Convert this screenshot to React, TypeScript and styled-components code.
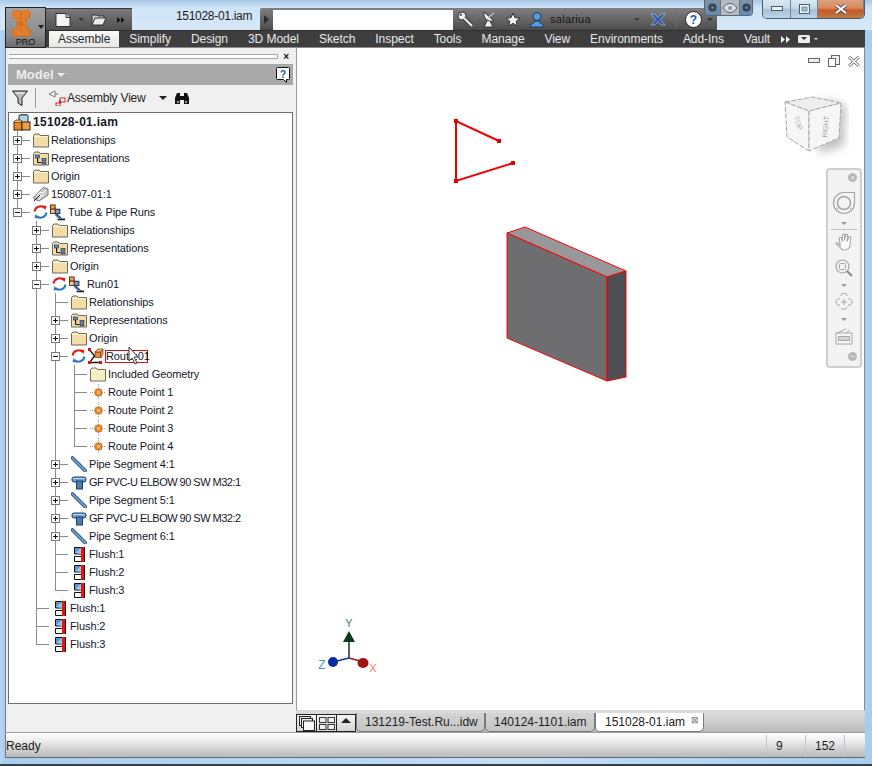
import React from "react";
import styled, { createGlobalStyle } from "styled-components";

const Global = createGlobalStyle`
  html, body { margin: 0; padding: 0; background: #fff; }
  body { width: 872px; height: 766px; overflow: hidden; font-family: "Liberation Sans", Arial, sans-serif; }
  #root { width: 872px; height: 766px; }
  * { box-sizing: border-box; }
`;

const Window = styled.div`
  position: relative;
  width: 872px;
  height: 766px;
  display: flex;
  flex-direction: column;
  overflow: hidden;
  background: linear-gradient(90deg, #b6d5f0 0, #a9cdec 5px, #c4def5 60%, #a8cdee 100%);
  border-bottom: 2px solid #3a3f44;
`;
const TitleArea = styled.div`
  height: 30px;
  flex: none;
  display: flex;
  padding-left: 45px;
  background: linear-gradient(180deg, #a9c9e8 0, #cfe4f7 8px, #d6e8f8 100%);
`;
const QuickBar = styled.div`
  width: 87px;
  height: 22px;
  margin-top: 8px;
  display: flex;
  align-items: center;
  gap: 7px;
  padding-left: 10px;
  background: linear-gradient(180deg, #7a7a7a, #505050);
  border-top: 1px solid #3c3c3c;
`;
const DocTitle = styled.div`
  width: 128px;
  padding: 9px 0 0 44px;
  font-size: 12px;
  letter-spacing: -0.3px;
  color: #1c1c1c;
  white-space: nowrap;
`;
const InfoBar = styled.div`
  width: 457px;
  height: 22px;
  margin-top: 8px;
  display: flex;
  align-items: center;
  background: linear-gradient(180deg, #808080, #4c4c4c);
  border-top-left-radius: 2px;
`;
const SearchArrow = styled.div`
  width: 13px;
  display: flex;
  justify-content: center;
`;
const SearchInput = styled.div`
  width: 180px;
  height: 20px;
  margin-top: 2px;
  background: #fff;
`;
const InfoIcons = styled.div`
  display: flex;
  align-items: center;
  height: 100%;
  padding-left: 4px;
`;
const InfoSep = styled.span`
  width: 1px;
  height: 18px;
  margin: 0 8px 0 10px;
  background: #707070;
`;
const UserName = styled.span`
  font-size: 11px;
  letter-spacing: 0.3px;
  color: #1a1212;
  width: 84px;
`;
const AppButton = styled.div`
  position: absolute;
  left: 5px;
  top: 7px;
  width: 41px;
  height: 41px;
  border: 1px solid #222;
  background: linear-gradient(180deg, #a3a3a3, #8a8a8a 70%, #6e6e6e);
  z-index: 3;
`;
const AppGlyph = styled.svg`
  display: block;
`;
const ProLabel = styled.span`
  position: absolute;
  left: 0;
  right: 0;
  bottom: 0;
  text-align: center;
  font-size: 9px;
  color: #111;
`;
const NvidiaCluster = styled.div`
  position: absolute;
  top: 0;
  left: 704px;
  width: 49px;
  height: 16px;
  display: flex;
  border: 1px solid #5c6670;
  border-top: none;
  border-radius: 0 0 4px 4px;
  overflow: hidden;
  z-index: 2;
`;
const NvidiaCell = styled.div<{ $w: number; $light?: boolean }>`
  width: ${(p) => p.$w}px;
  display: flex;
  align-items: center;
  justify-content: center;
  background: ${(p) => (p.$light ? "#b4babf" : "linear-gradient(180deg,#7f93a6,#5f8ab4)")};
  border-right: 1px solid #6c7680;
  &:last-child { border-right: none; }
`;
const WindowControls = styled.div`
  position: absolute;
  top: 0;
  left: 762px;
  width: 103px;
  height: 19px;
  display: flex;
  border: 1px solid #4c5c6c;
  border-top: none;
  border-radius: 0 0 5px 5px;
  overflow: hidden;
  z-index: 2;
`;
const WinBtn = styled.div<{ $w: number; $close?: boolean }>`
  width: ${(p) => p.$w}px;
  display: flex;
  align-items: center;
  justify-content: center;
  border-right: 1px solid #6f8295;
  background: ${(p) =>
    p.$close
      ? "linear-gradient(180deg, #d9a27e 0, #d98a5c 45%, #d8532a 55%, #b9692f 75%, #c07a4a 100%)"
      : "linear-gradient(180deg, #dbe8f3 0, #c5d9ea 45%, #a7c0d6 55%, #bcd4e8 100%)"};
`;
const Ribbon = styled.div`
  height: 18px;
  flex: none;
  margin: 0 7px 0 45px;
  padding-left: 4px;
  display: flex;
  align-items: stretch;
  background: #3e3e3e;
  border-bottom: 1px solid #8c8c8c;
  border-top: 1px solid #2e2e2e;
`;
const RibbonTab = styled.div<{ $active?: boolean }>`
  padding: 0 ${(p) => (p.$active ? "9px" : "10px")};
  font-size: 12px;
  letter-spacing: -0.05px;
  line-height: 17px;
  white-space: nowrap;
  color: ${(p) => (p.$active ? "#2a2a2a" : "#e8e8e8")};
  background: ${(p) => (p.$active ? "linear-gradient(180deg,#fafafa,#e6e6e6)" : "transparent")};
`;
const RibbonExtra = styled.div`
  display: flex;
  align-items: center;
  gap: 7px;
  margin-left: 1px;
`;
const RibbonMenuCaret = styled.span`
  display: flex;
  margin-left: -3px;
`;
const Body = styled.div`
  flex: 1;
  min-height: 0;
  display: flex;
  margin: 0 7px 0 5px;
`;
const SidePanel = styled.div`
  width: 291px;
  flex: none;
  display: flex;
  flex-direction: column;
  padding: 1px 3px 28px 2px;
  background: #f0f0f0;
  border-left: 1px solid #6d7d8c;
`;
const PanelGrip = styled.div`
  height: 15px;
  flex: none;
  display: flex;
  align-items: center;
  gap: 5px;
  padding: 0 4px 0 1px;
`;
const GripLines = styled.div`
  flex: 1;
  height: 5px;
  border: 1px solid #a8a8a8;
  border-left: none;
  background: #fff;
`;
const GripClose = styled.span`
  font-size: 10px;
  font-weight: bold;
  color: #111;
  line-height: 10px;
`;
const ModelBar = styled.div`
  height: 21px;
  flex: none;
  display: flex;
  align-items: center;
  justify-content: space-between;
  padding: 0 3px 0 8px;
  background: #a9a9a9;
`;
const ModelTitle = styled.span`
  font-size: 13px;
  font-weight: bold;
  color: #ececec;
  display: flex;
  align-items: center;
  gap: 3px;
`;
const Caret = styled.i<{ $c?: string; $s?: number }>`
  display: inline-block;
  width: 0;
  height: 0;
  border-left: ${(p) => p.$s ?? 4}px solid transparent;
  border-right: ${(p) => p.$s ?? 4}px solid transparent;
  border-top: ${(p) => p.$s ?? 4}px solid ${(p) => p.$c ?? "#333"};
`;
const PanelTools = styled.div`
  height: 27px;
  flex: none;
  display: flex;
  align-items: center;
  padding: 0 0 2px 4px;
`;
const ToolSep = styled.div`
  width: 1px;
  height: 20px;
  margin: 0 12px 0 7px;
  background: #9a9a9a;
`;
const ViewName = styled.span`
  font-size: 12px;
  letter-spacing: -0.2px;
  color: #1f1f1f;
  margin: 0 13px 0 1px;
  white-space: nowrap;
`;
const TreeBox = styled.div`
  flex: 1;
  min-height: 0;
  background: #fff;
  border: 1px solid #6e6e6e;
`;
const TreeRow = styled.div`
  position: relative;
  height: 18px;
  display: flex;
  align-items: center;
  white-space: nowrap;
`;
const RootRow = styled(TreeRow)`
  padding-left: 4px;
  gap: 2px;
`;
const Guide = styled.div<{ $kind: GuideKind }>`
  position: relative;
  width: 19px;
  height: 18px;
  flex: none;
  &::before {
    content: "";
    display: ${(p) => (p.$kind === "none" ? "none" : "block")};
    position: absolute;
    left: 8px;
    top: 0;
    width: 1px;
    height: ${(p) => (p.$kind === "end" || p.$kind === "minusEnd" ? "10px" : "18px")};
    background: #8a8a8a;
  }
  &::after {
    content: "";
    display: ${(p) => (p.$kind === "none" || p.$kind === "line" ? "none" : "block")};
    position: absolute;
    left: 9px;
    top: 9px;
    width: 12px;
    height: 1px;
    background: #8a8a8a;
  }
`;
const Expander = styled.span`
  position: absolute;
  left: 4px;
  top: 5px;
  width: 9px;
  height: 9px;
  border: 1px solid #7a7a7a;
  background: #fff;
  z-index: 1;
  &::before {
    content: "";
    position: absolute;
    left: 1px;
    top: 3px;
    width: 5px;
    height: 1px;
    background: #111;
  }
`;
const ExpanderPlus = styled(Expander)`
  &::after {
    content: "";
    position: absolute;
    left: 3px;
    top: 1px;
    width: 1px;
    height: 5px;
    background: #111;
  }
`;
const Icons = styled.div`
  display: flex;
  align-items: center;
  gap: 2px;
  margin-left: 5px;
  flex: none;
`;
const Label = styled.span<{ $tight?: boolean; $edit?: boolean }>`
  font-size: 11px;
  letter-spacing: ${(p) => (p.$tight ? "-0.52px" : "-0.1px")};
  margin-left: ${(p) => (p.$edit ? "1px" : "2px")};
  color: #14182a;
  ${(p) => (p.$edit ? "border: 1px solid #e01010; line-height: 11px; width: 43px; height: 13px;" : "")}
`;
const RootLabel = styled.span`
  font-size: 12px;
  letter-spacing: 0.3px;
  font-weight: bold;
  color: #14182a;
`;
const FlushSlot = styled.span`
  width: 16px;
  display: flex;
  justify-content: flex-end;
  padding-right: 2px;
`;
const Cursor = styled.svg`
  position: absolute;
  left: 119px;
  top: 0px;
  z-index: 2;
`;
const Main = styled.div`
  flex: 1;
  min-width: 0;
  display: flex;
  flex-direction: column;
  background: #f0f0f0;
`;
const Viewport = styled.div`
  position: relative;
  flex: 1;
  min-height: 0;
  background: #fff;
  border-left: 1px solid #9a9a9a;
  border-right: 1px solid #8a8a8a;
  border-bottom: 1px solid #d8d8d8;
`;
const Scene = styled.svg`
  position: absolute;
  inset: 0;
`;
const ViewControls = styled.div`
  position: absolute;
  top: 7px;
  right: 4px;
  display: flex;
  gap: 8px;
  align-items: center;
`;
const NavBar = styled.div`
  position: absolute;
  top: 120px;
  left: 529px;
  width: 36px;
  height: 200px;
  display: flex;
  flex-direction: column;
  align-items: center;
  background: #f3f3f3;
  border: 2px solid #cfcfcf;
  border-radius: 4px;
  padding-top: 3px;
`;
const NavDot = styled.div`
  align-self: flex-end;
  margin-right: 3px;
  width: 9px;
  height: 9px;
  border-radius: 50%;
  background: #b8b8b8;
  display: flex;
  align-items: center;
  justify-content: center;
  font-size: 8px;
  line-height: 8px;
  color: #f4f4f4;
`;
const NavRule = styled.div`
  width: 26px;
  height: 1px;
  margin: 1px 0 2px;
  background: #c4c4c4;
`;
const NavCaret = styled.div`
  height: 10px;
  display: flex;
  align-items: center;
  margin-top: 3px;
`;
const NavGap = styled.div<{ $h: number }>`
  height: ${(p) => p.$h}px;
  flex: none;
`;
const DocTabs = styled.div`
  height: 21px;
  flex: none;
  display: flex;
  align-items: flex-start;
  background: linear-gradient(180deg, #dedede, #bbbbbb);
`;
const TabIcons = styled.div`
  display: flex;
  flex: none;
  height: 18px;
  margin-top: 3px;
`;
const TabIcon = styled.div<{ $w: number }>`
  width: ${(p) => p.$w}px;
  display: flex;
  align-items: center;
  justify-content: center;
  border: 1px solid #222;
  border-right-width: 0;
  background: linear-gradient(180deg, #f5f5f5, #d4d4d4);
  &:last-child { border-right-width: 1px; }
`;
const DocTab = styled.div<{ $w: number; $active?: boolean }>`
  width: ${(p) => p.$w}px;
  height: 19px;
  margin-top: 2px;
  display: flex;
  align-items: center;
  gap: 6px;
  padding-left: ${(p) => (p.$active ? "9px" : "8px")};
  font-size: 12px;
  white-space: nowrap;
  color: #222;
  border: 1px solid #7a7a7a;
  border-top: none;
  border-radius: 0 0 5px 5px;
  background: ${(p) => (p.$active ? "#fff" : "linear-gradient(180deg,#d4d4d4,#c4c4c4)")};
`;
const TabClose = styled.span`
  font-size: 9px;
  color: #777;
  margin-top: -5px;
`;
const StatusBar = styled.div`
  height: 26px;
  flex: none;
  margin: 0 7px 6px 5px;
  padding-top: 1px;
  display: flex;
  align-items: center;
  font-size: 12px;
  color: #1c1c1c;
  background: linear-gradient(180deg, #fdfdfd 0, #f2f2f2 25%, #b9b9b9 100%);
  border-top: 1px solid #9c9c9c;
  border-bottom: 1px solid #5f6b76;
  border-left: 1px solid #6d7d8c;
`;
const StatusText = styled.span`
  flex: 1;
`;
const StatusCell = styled.div<{ $w: number }>`
  width: ${(p) => p.$w}px;
  height: 22px;
  display: flex;
  align-items: center;
  padding-left: 9px;
  border-left: 1px solid #c6c6c6;
`;

/* ---------- icons ---------- */
const Folder = ({ tint = "#f4dca8" }: { tint?: string }) => (
  <svg width="16" height="15" viewBox="0 0 16 15">
    <path d="M.5 14V2.500l1.500-1.500h4l1.500 1.500H15.500V14z" fill={tint} stroke="#6e6a58" />
    <path d="M1 3.500h14" stroke="#fff6dc" />
  </svg>
);
const RepFolder = () => (
  <svg width="16" height="15" viewBox="0 0 16 15">
    <path d="M.5 14V2.500l1.500-1.500h4l1.500 1.500H15.500V14z" fill="#f4dca8" stroke="#6e6a58" />
    <rect x="2.500" y="4" width="4" height="3" fill="#5d8fc4" stroke="#223" strokeWidth=".6" />
    <path d="M4.500 7v4.500h4M4.500 9h1" stroke="#111" fill="none" />
    <rect x="9" y="7.500" width="4" height="2.500" fill="#5d8fc4" stroke="#223" strokeWidth=".6" />
    <rect x="9" y="11" width="4" height="2" fill="#5d8fc4" stroke="#223" strokeWidth=".6" />
  </svg>
);
const Assembly = () => (
  <svg width="18" height="17" viewBox="0 0 18 17">
    <path d="M6 1.500h9v7H6z" fill="#b7d3ea" stroke="#1f2a36" />
    <path d="M6 1.500l2-1h6l1 1" fill="#dbe8f3" stroke="#1f2a36" strokeWidth=".8" />
    <rect x="1" y="8" width="8" height="8" fill="#e8882c" stroke="#332010" />
    <rect x="9" y="8" width="8" height="8" fill="#efa04a" stroke="#332010" />
    <path d="M1 8l2-2h5l1 2" fill="#f2bb78" stroke="#332010" strokeWidth=".7" />
  </svg>
);
const PartIcon = () => (
  <svg width="16" height="16" viewBox="0 0 16 16">
    <path d="M1 11l9-9.500 5 1.500v6l-9 6-5-2z" fill="#c9c9c9" stroke="#777" />
    <path d="M4 10l3-4 3 1 3-3M6 14l2-5 3 1" stroke="#fff" fill="none" />
    <path d="M1 15l6-6" stroke="#222" />
  </svg>
);
const Update = () => (
  <svg width="15" height="14" viewBox="0 0 15 14">
    <path d="M1.500 6.500a6 6 0 0 1 10-3.500" fill="none" stroke="#e01c14" strokeWidth="2" />
    <path d="M9 .5l4.500.5-1 4z" fill="#e01c14" />
    <path d="M13.500 7.500a6 6 0 0 1-10 3.500" fill="none" stroke="#2f78c0" strokeWidth="2" />
    <path d="M6 13.500l-4.500-.5 1-4z" fill="#2f78c0" />
  </svg>
);
const RunIcon = () => (
  <svg width="16" height="17" viewBox="0 0 17 17">
    <rect x=".5" y=".5" width="5" height="4.500" fill="#e9a24f" stroke="#5a2a10" />
    <rect x="5.500" y="5" width="5" height="4.500" fill="#6d9dd0" stroke="#14233a" />
    <rect x=".5" y="5" width="5" height="4.500" fill="#f3c88f" stroke="#5a2a10" />
    <path d="M6 10l5 5" stroke="#5a86b5" strokeWidth="3" />
    <path d="M5 9l8 6.500h3" stroke="#16243c" fill="none" />
    <path d="M8 16h8" stroke="#16243c" strokeWidth="1.500" />
  </svg>
);
const RouteIcon = () => (
  <svg width="16" height="16" viewBox="0 0 16 16">
    <path d="M1.500 1.500l5 6.500-5 6.500H13" fill="none" stroke="#111" strokeWidth="1.300" />
    <rect x="7" y="4" width="6" height="5.500" fill="#e98d2f" stroke="#6a3410" strokeWidth=".7" />
    <path d="M7 4l3-3h5v5l-2 3.500V4zM13 4l2-3" fill="#f3b877" stroke="#6a3410" strokeWidth=".7" />
    <rect x="0" y="0" width="3" height="3" fill="#e01010" />
    <rect x="0" y="13" width="3" height="3" fill="#e01010" />
    <rect x="11" y="13" width="3" height="3" fill="#e01010" />
  </svg>
);
const RoutePoint = () => (
  <svg width="16" height="16" viewBox="0 0 16 16">
    <path d="M8.500 0v16M0 8.500h16" stroke="#9a9a9a" strokeDasharray="1 1" />
    <rect x="5" y="5" width="7" height="7" rx="2.500" fill="#e5862a" stroke="#c97a28" />
    <rect x="7" y="7" width="3" height="3" fill="#f2b36e" />
  </svg>
);
const PipeIcon = () => (
  <svg width="16" height="16" viewBox="0 0 16 16">
    <path d="M1.500 2L14.500 15" stroke="#254a78" strokeWidth="3.600" strokeLinecap="round" />
    <path d="M1.500 2L14.500 15" stroke="#6ea0d4" strokeWidth="1.800" strokeLinecap="round" />
  </svg>
);
const ElbowIcon = () => (
  <svg width="16" height="15" viewBox="0 0 16 15">
    <rect x="1" y="2" width="14" height="5" rx="2" fill="#6ea0d4" stroke="#1e3d63" />
    <rect x="5.500" y="6" width="6" height="8" fill="#4b7cb0" stroke="#1e3d63" />
    <path d="M2 3.500h12" stroke="#bcd6ef" />
  </svg>
);
const FlushIcon = () => (
  <FlushSlot>
    <svg width="11" height="15" viewBox="0 0 11 15">
      <path d="M.5 9.500h7V14.500H.5z" fill="#fff" stroke="#111" />
      <path d="M.5.5h7V7H.5z" fill="#5d93d3" stroke="#111" />
      <path d="M1 6l6-5v6z" fill="#9fc0e6" />
      <rect x="7" y="0" width="3" height="15" fill="#e81414" />
      <path d="M10.500 0v15" stroke="#111" />
    </svg>
  </FlushSlot>
);

type GuideKind = "none" | "line" | "tee" | "end" | "plus" | "minus" | "minusEnd";
type IconName = "folder" | "geo" | "rep" | "part" | "update-run" | "update-route" | "point" | "pipe" | "elbow" | "flush";
type Row = { depth: GuideKind[]; icon: IconName; text: string; tight?: boolean };

const iconFor = (n: IconName) => {
  switch (n) {
    case "folder": return <Folder />;
    case "geo": return <Folder tint="#f5f0c0" />;
    case "rep": return <RepFolder />;
    case "part": return <PartIcon />;
    case "update-run": return (<><Update /><RunIcon /></>);
    case "update-route": return (<><Update /><RouteIcon /></>);
    case "point": return <RoutePoint />;
    case "pipe": return <PipeIcon />;
    case "elbow": return <ElbowIcon />;
    case "flush": return <FlushIcon />;
  }
};

const rows: Row[] = [
  { depth: ["plus"], icon: "folder", text: "Relationships" },
  { depth: ["plus"], icon: "rep", text: "Representations" },
  { depth: ["plus"], icon: "folder", text: "Origin" },
  { depth: ["plus"], icon: "part", text: "150807-01:1" },
  { depth: ["minusEnd"], icon: "update-run", text: "Tube & Pipe Runs" },
  { depth: ["none", "plus"], icon: "folder", text: "Relationships" },
  { depth: ["none", "plus"], icon: "rep", text: "Representations" },
  { depth: ["none", "plus"], icon: "folder", text: "Origin" },
  { depth: ["none", "minus"], icon: "update-run", text: "Run01" },
  { depth: ["none", "line", "tee"], icon: "folder", text: "Relationships" },
  { depth: ["none", "line", "plus"], icon: "rep", text: "Representations" },
  { depth: ["none", "line", "plus"], icon: "folder", text: "Origin" },
  { depth: ["none", "line", "minus"], icon: "update-route", text: "Route:01" },
  { depth: ["none", "line", "line", "tee"], icon: "geo", text: "Included Geometry" },
  { depth: ["none", "line", "line", "tee"], icon: "point", text: "Route Point 1" },
  { depth: ["none", "line", "line", "tee"], icon: "point", text: "Route Point 2" },
  { depth: ["none", "line", "line", "tee"], icon: "point", text: "Route Point 3" },
  { depth: ["none", "line", "line", "end"], icon: "point", text: "Route Point 4" },
  { depth: ["none", "line", "plus"], icon: "pipe", text: "Pipe Segment 4:1" },
  { depth: ["none", "line", "plus"], icon: "elbow", text: "GF PVC-U ELBOW 90 SW M32:1", tight: true },
  { depth: ["none", "line", "plus"], icon: "pipe", text: "Pipe Segment 5:1" },
  { depth: ["none", "line", "plus"], icon: "elbow", text: "GF PVC-U ELBOW 90 SW M32:2", tight: true },
  { depth: ["none", "line", "plus"], icon: "pipe", text: "Pipe Segment 6:1" },
  { depth: ["none", "line", "tee"], icon: "flush", text: "Flush:1" },
  { depth: ["none", "line", "tee"], icon: "flush", text: "Flush:2" },
  { depth: ["none", "line", "end"], icon: "flush", text: "Flush:3" },
  { depth: ["none", "tee"], icon: "flush", text: "Flush:1" },
  { depth: ["none", "tee"], icon: "flush", text: "Flush:2" },
  { depth: ["none", "end"], icon: "flush", text: "Flush:3" },
];

const ribbonTabs = ["Simplify", "Design", "3D Model", "Sketch", "Inspect", "Tools", "Manage", "View", "Environments", "Add-Ins", "Vault"];

const TreeItem = ({ row }: { row: Row }) => {
  const editing = row.text === "Route:01";
  return (
    <TreeRow>
      {row.depth.map((k, i) => (
        <Guide key={i} $kind={k}>
          {k === "plus" && <ExpanderPlus />}
          {(k === "minus" || k === "minusEnd") && <Expander />}
        </Guide>
      ))}
      <Icons>{iconFor(row.icon)}</Icons>
      <Label $edit={editing} $tight={row.tight}>{row.text}</Label>
      {editing && (
        <Cursor width="11" height="18" viewBox="0 0 11 18">
          <path d="M1 0v14l3-3 3 6 2-1-3-6h4z" fill="#fff" stroke="#333" strokeWidth="1" />
        </Cursor>
      )}
    </TreeRow>
  );
};

const Scene3D = () => (
  <Scene width="567" height="662" viewBox="297 48 567 662">
    <defs>
      <filter id="blur"><feGaussianBlur stdDeviation="4" /></filter>
    </defs>
    <path d="M499 141L456 121V181L513 163" fill="none" stroke="#f00000" strokeWidth="2" />
    {[[456, 121], [499, 141], [456, 181], [513, 163]].map(([x, y]) => (
      <rect key={x + y} x={x - 2} y={y - 2} width="4" height="4" fill="#e00000" />
    ))}
    <path d="M507 233L525 227L626 271L607 277z" fill="#98989b" stroke="#f00" />
    <path d="M507 233L607 277V381L507 338z" fill="#6e6e71" stroke="#f00" />
    <path d="M607 277L626 271V377L607 381z" fill="#4f4f53" stroke="#f00" />
    <path d="M349 658V640" stroke="#0a3a1a" strokeWidth="1.500" />
    <path d="M349 631l6 11h-12z" fill="#0a3a1a" />
    <path d="M349 658l-12 3" stroke="#123c9c" strokeWidth="1.500" />
    <ellipse cx="333" cy="662" rx="5" ry="5" fill="#0c2aa0" />
    <path d="M349 658l11 3" stroke="#a01818" strokeWidth="1.500" />
    <ellipse cx="363" cy="663" rx="5.500" ry="5" fill="#a01412" />
    <text x="349" y="627" textAnchor="middle" fontSize="11" fill="#5e7a66" fontFamily="Liberation Sans">Y</text>
    <text x="322" y="669" textAnchor="middle" fontSize="12" fill="#4d8fd8" fontFamily="Liberation Sans">Z</text>
    <text x="373" y="672" textAnchor="middle" fontSize="11" fill="#f08060" fontFamily="Liberation Sans">X</text>
    <path d="M824 98L846 106L844 146L818 154Z" fill="#c4c4c4" filter="url(#blur)" />
    <g stroke="#a8a8a8" fill="#f6f6f6" strokeDasharray="5 1.500">
      <path d="M785 102L813 97L841 103L809 111z" fill="#eeeeee" />
      <path d="M785 102L809 111V151L787 137z" />
      <path d="M809 111L841 103L839 138L809 151z" />
    </g>
    <text transform="translate(796 124) rotate(70)" textAnchor="middle" fontSize="7" fill="#b0b0b0" fontFamily="Liberation Sans">TOP</text>
    <text transform="translate(828 127) rotate(-85)" textAnchor="middle" fontSize="7" fill="#a0a0a0" fontFamily="Liberation Sans">RIGHT</text>
  </Scene>
);

const NavIcon = ({ kind }: { kind: "wheel" | "hand" | "zoom" | "orbit" | "rewind" }) => {
  const c = "#a6a6a6";
  if (kind === "wheel")
    return (
      <svg width="24" height="24" viewBox="0 0 24 24" fill="none" stroke={c}>
        <path d="M12 1.500H22.500V12a10.500 10.500 0 0 1-21 0A10.500 10.500 0 0 1 12 1.500z" strokeWidth="1.200" />
        <circle cx="12" cy="12" r="6.500" strokeWidth="1.500" />
        <path d="M6 17l-2 2M18 17l2 2" />
      </svg>
    );
  if (kind === "hand")
    return (
      <svg width="19" height="19" viewBox="0 0 18 18" fill="#fafafa" stroke={c}>
        <path d="M2 10l3 3-1-7a1 1 0 0 1 2 0l1 3V3a1 1 0 0 1 2 0v5l1-5a1 1 0 0 1 2 0l-.5 6 1.500-4a1 1 0 0 1 2 .5L14 14c-1 3-6 4-8 2L1 11z" />
      </svg>
    );
  if (kind === "zoom")
    return (
      <svg width="18" height="18" viewBox="0 0 18 18" fill="none" stroke={c}>
        <circle cx="7.500" cy="7.500" r="6.500" strokeWidth="1.200" />
        <rect x="4.500" y="4.500" width="6" height="6" rx="1" />
        <path d="M12 12l5 5" strokeWidth="2.200" stroke="#8c8c8c" />
      </svg>
    );
  if (kind === "orbit")
    return (
      <svg width="18" height="18" viewBox="0 0 18 18" fill="none" stroke={c}>
        <path d="M6 3a3 3 0 0 1 6 0M13 6a3 3 0 0 1 4 3 3 3 0 0 1-4 3M12 14c-1 3-5 3-6 1M5 12a3 3 0 0 1-4-3 3 3 0 0 1 4-3" />
        <path d="M9 6v6M6 9h6" />
      </svg>
    );
  return (
    <svg width="18" height="17" viewBox="0 0 18 17" fill="none" stroke={c}>
      <rect x="1" y="5" width="16" height="11" fill="#f6f6f6" />
      <rect x="3.500" y="8.500" width="11" height="4" fill="#d4d4d4" />
      <path d="M2 5l9-4M11 5l4-3" />
    </svg>
  );
};

const EyeDot = () => (
  <svg width="11" height="11" viewBox="0 0 11 11"><circle cx="5.500" cy="5.500" r="4" fill="#36444f" /><circle cx="5.500" cy="5.500" r="1.500" fill="#6e8092" /></svg>
);

export default function App() {
  return (
    <Window>
      <Global />
      <AppButton>
        <AppGlyph width="39" height="30" viewBox="0 0 39 30">
          <path d="M7 3h17v7h-4v11h4v7H7v-7h4V10H7z" fill="#e57e2a" stroke="#d96f1c" />
          <path d="M15 5v20M12 16h7" stroke="#b04a14" fill="none" strokeDasharray="2 2" />
          <path d="M32 17h6l-3 4z" fill="#222" />
        </AppGlyph>
        <ProLabel>PRO</ProLabel>
      </AppButton>
      <NvidiaCluster>
        <NvidiaCell $w={16}><EyeDot /></NvidiaCell>
        <NvidiaCell $w={19} $light>
          <svg width="16" height="12" viewBox="0 0 16 12"><path d="M1 6c4-6 10-6 14 0-4 6-10 6-14 0z" fill="#d8dfe4" stroke="#5a646c" /><circle cx="8" cy="6" r="2" fill="#8a98a4" /></svg>
        </NvidiaCell>
        <NvidiaCell $w={12}><EyeDot /></NvidiaCell>
      </NvidiaCluster>
      <WindowControls>
        <WinBtn $w={28}>
          <svg width="12" height="6" viewBox="0 0 12 6"><rect x=".5" y=".5" width="11" height="4" fill="#eef4f8" stroke="#4c5c6a" /></svg>
        </WinBtn>
        <WinBtn $w={27}>
          <svg width="11" height="10" viewBox="0 0 11 10"><rect x=".5" y=".5" width="10" height="9" fill="#eef4f8" stroke="#4c5c6a" /><rect x="3" y="3" width="5" height="4" fill="#a9c2d8" stroke="#4c5c6a" strokeWidth=".6" /></svg>
        </WinBtn>
        <WinBtn $w={46} $close>
          <svg width="14" height="10" viewBox="0 0 14 10"><path d="M2 1l10 8M12 1L2 9" stroke="#444" strokeWidth="3.600" /><path d="M2 1l10 8M12 1L2 9" stroke="#fff" strokeWidth="2.200" /></svg>
        </WinBtn>
      </WindowControls>

      <TitleArea>
        <QuickBar>
          <svg width="16" height="14" viewBox="0 0 16 14"><path d="M1 .5h10l4 4v9H1z" fill="#f4f4f4" stroke="#333" /><path d="M11 .5v4h4" fill="#ccc" stroke="#333" /></svg>
          <Caret $c="#3a3a3a" $s={3} />
          <svg width="16" height="13" viewBox="0 0 16 13"><path d="M1 12V2h5l1 1h6v2" fill="#cfcfcf" stroke="#333" /><path d="M1 12l3-7h11l-3 7z" fill="#ececec" stroke="#333" /></svg>
          <svg width="8" height="6" viewBox="0 0 8 6" style={{ marginLeft: 3 }}><path d="M0 0l3.500 3L0 6zM4 0l3.500 3L4 6z" fill="#111" /></svg>
        </QuickBar>
        <DocTitle>151028-01.iam</DocTitle>
        <InfoBar>
          <SearchArrow>
            <svg width="6" height="9" viewBox="0 0 6 9"><path d="M0 0l5 4.500L0 9z" fill="#2c2c2c" /></svg>
          </SearchArrow>
          <SearchInput />
          <InfoIcons>
            <svg width="17" height="17" viewBox="0 0 17 17" style={{ marginRight: 7 }}><circle cx="5" cy="5" r="4" fill="#f0f0f0" stroke="#333" /><path d="M7 7l8 8" stroke="#333" strokeWidth="4" /><path d="M7 7l8 8" stroke="#e8e8e8" strokeWidth="2.400" /><circle cx="3.800" cy="3.800" r="1.200" fill="#555" /></svg>
            <svg width="16" height="17" viewBox="0 0 16 17" style={{ marginRight: 8 }}><path d="M3 1c-1 6 3 10 10 9z" fill="#f2f2f2" stroke="#333" /><path d="M6 10l-3 6h9L9 10" fill="#f2f2f2" stroke="#333" /><path d="M8 6l5-4" stroke="#eee" /></svg>
            <svg width="16" height="15" viewBox="0 0 16 15" style={{ marginRight: 8 }}><path d="M8 1l2 4.700 5 .4-3.800 3.200L12.400 14 8 11.400 3.600 14l1.200-4.700L1 6.100l5-.4z" fill="#f2f2f2" stroke="#2c2c2c" /></svg>
            <svg width="16" height="17" viewBox="0 0 16 17" style={{ marginRight: 5 }}><circle cx="8" cy="5.500" r="4" fill="#5a9ad8" stroke="#173a66" /><path d="M1 16c0-3 4-3 5-6h4c1 3 5 3 5 6z" fill="#5a9ad8" stroke="#173a66" /></svg>
            <UserName>salariua</UserName>
            <Caret $c="#3c3c3c" $s={3} />
            <svg width="16" height="13" viewBox="0 0 16 13" style={{ marginLeft: 10 }}><path d="M1 1h4l3 3.500L11 1h4l-4.500 5.500L15 12h-4L8 8.500 5 12H1l4.500-5.500z" fill="#2e5fa8" stroke="#cfe0f2" strokeWidth=".5" /></svg>
            <InfoSep />
            <svg width="17" height="17" viewBox="0 0 17 17"><circle cx="8.500" cy="8.500" r="8" fill="#fff" stroke="#222" /><text x="8.500" y="13" textAnchor="middle" fontSize="12" fontWeight="bold" fill="#1d56b0" fontFamily="Liberation Sans">?</text></svg>
            <span style={{ marginLeft: 5, display: "flex" }}><Caret $c="#333" $s={3} /></span>
          </InfoIcons>
        </InfoBar>
      </TitleArea>

      <Ribbon>
        <RibbonTab $active>Assemble</RibbonTab>
        {ribbonTabs.map((t) => (
          <RibbonTab key={t}>{t}</RibbonTab>
        ))}
        <RibbonExtra>
          <svg width="10" height="7" viewBox="0 0 10 7"><path d="M0 0l4 3.500L0 7zM5 0l4 3.500L5 7z" fill="#f0f0f0" /></svg>
          <svg width="12" height="8" viewBox="0 0 12 8"><rect width="12" height="8" rx="1.500" fill="#eee" /><path d="M3 2h6L6 5z" fill="#333" /></svg>
          <RibbonMenuCaret><Caret $c="#ddd" $s={2} /></RibbonMenuCaret>
        </RibbonExtra>
      </Ribbon>

      <Body>
        <SidePanel>
          <PanelGrip>
            <GripLines />
            <GripClose>×</GripClose>
          </PanelGrip>
          <ModelBar>
            <ModelTitle>
              Model <Caret $c="#ececec" />
            </ModelTitle>
            <svg width="14" height="16" viewBox="0 0 14 16">
              <path d="M.5 1.500a1 1 0 0 1 1-1h11a1 1 0 0 1 1 1v10a1 1 0 0 1-1 1h-2v3l-3-3h-6a1 1 0 0 1-1-1z" fill="#fff" stroke="#111" />
              <text x="7" y="10.500" textAnchor="middle" fontSize="10" fontWeight="bold" fill="#1d4fa8" fontFamily="Liberation Sans">?</text>
            </svg>
          </ModelBar>
          <PanelTools>
            <svg width="16" height="16" viewBox="0 0 16 16">
              <path d="M.5 1h15L10 8v7.500l-4-2.500V8z" fill="#b9b9b9" stroke="#222" />
              <path d="M3 3h10" stroke="#fff" />
            </svg>
            <ToolSep />
            <svg width="18" height="17" viewBox="0 0 18 17">
              <path d="M1 5l6-3v6z" fill="#fff" stroke="#444" strokeWidth=".7" />
              <path d="M7 5h3" stroke="#666" />
              <rect x="12" y="9" width="5" height="4" fill="#fff" stroke="#e02020" />
              <path d="M12 11v4" stroke="#111" />
              <rect x="8" y="14" width="4" height="3" fill="#fff" stroke="#e02020" />
            </svg>
            <ViewName>Assembly View</ViewName>
            <Caret $c="#222" $s={4} />
            <svg width="16" height="14" viewBox="0 0 16 14" style={{ marginLeft: 7 }}>
              <path d="M1 13V7l2-5h3v11zM15 13V7l-2-5h-3v11zM6 5h4v4H6z" fill="#111" />
              <circle cx="4" cy="11" r="1.200" fill="#999" />
              <circle cx="12" cy="11" r="1.200" fill="#999" />
            </svg>
          </PanelTools>
          <TreeBox>
            <RootRow>
              <Assembly />
              <RootLabel>151028-01.iam</RootLabel>
            </RootRow>
            {rows.map((r, i) => (
              <TreeItem key={i} row={r} />
            ))}
          </TreeBox>
        </SidePanel>
        <Main>
          <Viewport>
            <Scene3D />
            <ViewControls>
              <svg width="12" height="6" viewBox="0 0 12 6"><rect x=".5" y=".5" width="11" height="4" fill="#eee" stroke="#666" /></svg>
              <svg width="12" height="12" viewBox="0 0 12 12"><rect x="3.500" y=".5" width="8" height="9" fill="#eee" stroke="#666" /><rect x=".5" y="3.500" width="7" height="8" fill="#fff" stroke="#666" /></svg>
              <svg width="12" height="11" viewBox="0 0 12 11"><path d="M1 1l10 9M11 1L1 10" stroke="#666" strokeWidth="3" /><path d="M1 1l10 9M11 1L1 10" stroke="#fff" strokeWidth="1.500" /></svg>
            </ViewControls>
            <NavBar>
              <NavDot>×</NavDot>
              <NavGap $h={9} />
              <NavIcon kind="wheel" />
              <NavCaret><Caret $c="#999" $s={3} /></NavCaret>
              <NavRule />
              <NavIcon kind="hand" />
              <NavGap $h={8} />
              <NavIcon kind="zoom" />
              <NavCaret><Caret $c="#999" $s={3} /></NavCaret>
              <NavGap $h={3} />
              <NavIcon kind="orbit" />
              <NavCaret><Caret $c="#999" $s={3} /></NavCaret>
              <NavGap $h={4} />
              <NavIcon kind="rewind" />
              <NavGap $h={7} />
              <NavDot>−</NavDot>
            </NavBar>
          </Viewport>
          <DocTabs>
            <TabIcons>
              <TabIcon $w={20}>
                <svg width="16" height="15" viewBox="0 0 16 15" fill="#eee" stroke="#222"><rect x=".5" y=".5" width="11" height="9" /><rect x="2.500" y="2.500" width="11" height="9" /><rect x="4.500" y="5" width="11" height="9.500" fill="#f8f8f8" /></svg>
              </TabIcon>
              <TabIcon $w={20}>
                <svg width="16" height="13" viewBox="0 0 16 13" fill="#eee" stroke="#333"><rect x=".5" y=".5" width="6.500" height="5" /><rect x="9" y=".5" width="6.500" height="5" /><rect x=".5" y="7.500" width="6.500" height="5" /><rect x="9" y="7.500" width="6.500" height="5" /></svg>
              </TabIcon>
              <TabIcon $w={20}>
                <svg width="10" height="5" viewBox="0 0 10 5" style={{ marginBottom: 5 }}><path d="M5 0l5 5H0z" fill="#222" /></svg>
              </TabIcon>
            </TabIcons>
            <DocTab $w={129}>131219-Test.Ru...idw</DocTab>
            <DocTab $w={110}>140124-1101.iam</DocTab>
            <DocTab $w={109} $active>
              151028-01.iam <TabClose>⊠</TabClose>
            </DocTab>
          </DocTabs>
        </Main>
      </Body>

      <StatusBar>
        <StatusText>Ready</StatusText>
        <StatusCell $w={39}>9</StatusCell>
        <StatusCell $w={39}>152</StatusCell>
        <StatusCell $w={21} />
      </StatusBar>
    </Window>
  );
}
